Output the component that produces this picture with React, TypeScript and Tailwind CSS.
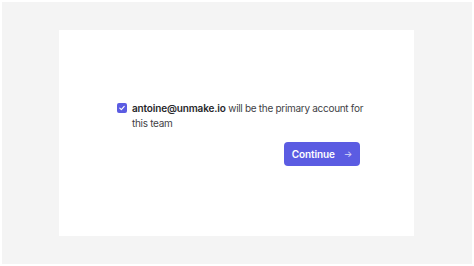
import React from 'react';

export default function App() {
  return (
    <div className="w-[474px] h-[266px] bg-white p-[2px]" style={{ fontFamily: 'Inter, "Noto Sans", sans-serif' }}>
      <div className="w-full h-full bg-[#f4f4f4] pt-[28px] pl-[57px]">
        <div className="w-[355px] h-[206px] bg-white pt-[71px] pl-[58px]">
          <div className="w-[243px] flex flex-col">
            <label className="flex items-start gap-[5px] w-[250px]">
              <span className="mt-[2px] w-[10px] h-[10px] rounded-[2px] bg-[#5b5ce2] flex items-center justify-center shrink-0">
                <svg width="8" height="8" viewBox="0 0 10 10" fill="none">
                  <path d="M2.2 5.2 L4.2 7.1 L7.8 2.9" stroke="white" strokeWidth="1.4" strokeLinecap="round" strokeLinejoin="round" />
                </svg>
              </span>
              <p className="text-[10px] leading-[15px] tracking-[-0.3px] text-[#3f3f46]">
                <b className="font-semibold tracking-[-0.15px] text-[#27272a]">antoine@unmake.io</b> will be the primary account for this team
              </p>
            </label>
            <div className="flex justify-end mt-[11px]">
              <button className="h-[24px] w-[76px] rounded-[4px] bg-[#5b5ce2] text-white text-[10px] tracking-[-0.1px] font-semibold flex items-center justify-center gap-[9px]">
                Continue
                <span className="text-[9px] font-normal opacity-80">→</span>
              </button>
            </div>
          </div>
        </div>
      </div>
    </div>
  );
}
